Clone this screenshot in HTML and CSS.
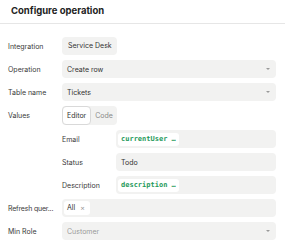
FILE: index.html
```html
<!DOCTYPE html>
<html>
<head>
<meta charset="utf-8">
<link rel="stylesheet" href="styles.css">
</head>
<body>
<div class="panel">
  <div class="header">Configure operation</div>
  <div class="form">
    <div class="row">
      <div class="label">Integration</div>
      <div class="control"><span class="chip">Service Desk</span></div>
    </div>
    <div class="row">
      <div class="label">Operation</div>
      <div class="control"><div class="select"><span>Create row</span><span class="caret"></span></div></div>
    </div>
    <div class="row">
      <div class="label">Table name</div>
      <div class="control"><div class="select"><span>Tickets</span><span class="caret"></span></div></div>
    </div>
    <div class="row">
      <div class="label">Values</div>
      <div class="control">
        <div class="tabs"><span class="tab active">Editor</span><span class="tab">Code</span></div>
      </div>
    </div>
    <div class="row sub">
      <div class="sublabel">Email</div>
      <div class="input"><span class="code">currentUser …</span></div>
    </div>
    <div class="row sub">
      <div class="sublabel">Status</div>
      <div class="input"><span>Todo</span></div>
    </div>
    <div class="row sub">
      <div class="sublabel">Description</div>
      <div class="input"><span class="code">description …</span></div>
    </div>
    <div class="row">
      <div class="label tight">Refresh quer...</div>
      <div class="control"><div class="input multi"><span class="tag">All <span class="x">×</span></span></div></div>
    </div>
    <div class="row">
      <div class="label">Min Role</div>
      <div class="control"><div class="select muted"><span>Customer</span><span class="caret"></span></div></div>
    </div>
  </div>
</div>
</body>
</html>
```
FILE: styles.css
```css
html, body {
  margin: 0;
  padding: 0;
  background: #fff;
}
body {
  font-family: Inter, "Noto Sans", sans-serif;
  font-size: 7px;
  color: #333;
}
.header {
  height: 23px;
  line-height: 21px;
  padding-left: 11px;
  font-size: 9.5px;
  font-weight: 700;
  color: #222;
  border-bottom: 1px solid #e6e6e6;
}
.form {
  display: flex;
  flex-direction: column;
  gap: 5px;
  padding: 13px 9px 0 8px;
}
.row {
  display: grid;
  grid-template-columns: 54px 1fr;
  align-items: center;
  min-height: 18px;
}
.row.sub {
  padding-left: 54px;
}
.label, .sublabel {
  color: #3a3a3a;
  white-space: nowrap;
}
.tight {
  letter-spacing: -0.2px;
}
.control {
  display: flex;
}
.chip {
  background: #f2f2f1;
  border-radius: 4px;
  height: 18px;
  line-height: 18px;
  padding: 0 5px 0 6px;
}
.select, .input {
  flex: 1;
  display: flex;
  align-items: center;
  justify-content: space-between;
  background: #f2f2f1;
  border-radius: 4px;
  height: 18px;
  padding: 0 6px 0 5px;
}
.input {
  justify-content: flex-start;
  padding-left: 2px;
}
.input > span:not(.code) {
  padding-left: 3px;
}
.input > .tag {
  padding-left: 5px;
}
.muted {
  color: #9a9a9a;
}
.caret {
  width: 0;
  height: 0;
  border-left: 2px solid transparent;
  border-right: 2px solid transparent;
  border-top: 2px solid #9a9a9a;
}
.tabs {
  display: flex;
  background: #f2f2f1;
  border-radius: 4px;
  height: 19px;
}
.tab {
  display: flex;
  align-items: center;
  padding: 0 4px;
  color: #8a8a8a;
}
.tab.active {
  background: #fff;
  color: #333;
  border: 1px solid #d9d9d9;
  border-radius: 4px;
}
.code {
  background: #fff;
  border-radius: 3px;
  padding: 0 3px;
  height: 13px;
  line-height: 13px;
  font-family: "DejaVu Sans Mono", monospace;
  font-weight: 700;
  font-size: 7px;
  color: #1f9a5b;
}
.tag {
  background: #fff;
  border-radius: 3px;
  height: 14px;
  line-height: 14px;
  padding: 0 5px 0 5px;
  color: #333;
}
.tag .x {
  color: #999;
  margin-left: 3px;
}
```
